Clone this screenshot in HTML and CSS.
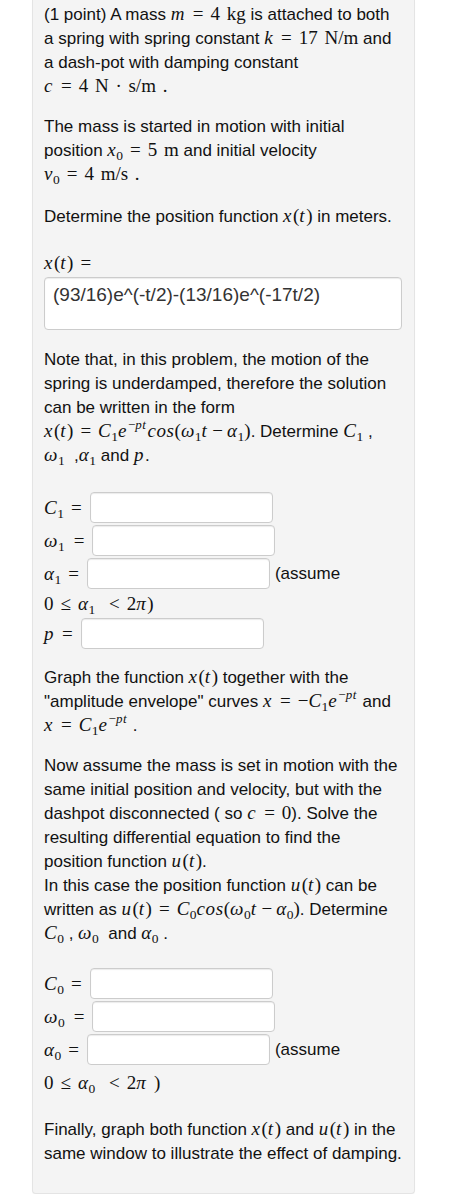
FILE: index.html
```html
<!DOCTYPE html>
<html>
<head>
<meta charset="utf-8">
<link rel="stylesheet" href="styles.css">
</head>
<body>
<div class="card">
  <p class="first">(1 point) A mass <span class="m"><i>m</i><span class="eq">=</span>4 kg</span> is attached to both<br>a spring with spring constant <span class="m"><i>k</i><span class="eq">=</span>17 N/m</span> and<br>a dash-pot with damping constant<br><span class="m"><i>c</i><span class="eq">=</span>4 N · s/m .</span></p>

  <p>The mass is started in motion with initial<br>position <span class="m"><i>x</i><sub>0</sub><span class="eq">=</span>5 m</span> and initial velocity<br><span class="m"><i>v</i><sub>0</sub><span class="eq">=</span>4 m/s .</span></p>

  <p class="determine">Determine the position function <span class="m"><i>x</i>(<i>t</i>)</span> in meters.</p>

  <div class="label-line"><span class="m"><i>x</i>(<i>t</i>)<span class="eq">=</span></span></div>
  <textarea class="answer-area" readonly>(93/16)e^(-t/2)-(13/16)e^(-17t/2)</textarea>

  <p class="after-area">Note that, in this problem, the motion of the<br>spring is underdamped, therefore the solution<br>can be written in the form<br><span class="m"><i>x</i>(<i>t</i>)<span class="eq">=</span><i>C</i><sub>1</sub><i>e</i><sup>−<i>pt</i></sup><i class="fn">cos</i>(<i>ω</i><sub>1</sub><i>t</i><span class="op">−</span><i>α</i><sub>1</sub>)</span>. Determine <span class="m"><i>C</i><sub>1</sub></span> ,<br><span class="m"><i>ω</i><sub>1</sub></span> &nbsp;,<span class="m"><i>α</i><sub>1</sub></span> and <span class="m"><i>p</i></span>.</p>

  <div class="answers">
    <div class="row"><span class="m"><i>C</i><sub>1</sub><span class="eq">=</span></span><input class="field" type="text"></div>
    <div class="row"><span class="m"><i>ω</i><sub>1</sub><span class="eq wide">=</span></span><input class="field" type="text"></div>
    <div class="row"><span class="m"><i>α</i><sub>1</sub><span class="eq">=</span></span><input class="field" type="text"><span class="assume">(assume</span></div>
    <div class="range"><span class="m">0<span class="eq">≤</span><i>α</i><sub>1</sub> <span class="eq">&lt;</span>2<i>π</i>)</span></div>
    <div class="row"><span class="m"><i>p</i><span class="eq">=</span></span><input class="field" type="text"></div>
  </div>

  <p>Graph the function <span class="m"><i>x</i>(<i>t</i>)</span> together with the<br>"amplitude envelope" curves <span class="m"><i>x</i><span class="eq">=</span>−<i>C</i><sub>1</sub><i>e</i><sup>−<i>pt</i></sup></span> and<br><span class="m"><i>x</i><span class="eq">=</span><i>C</i><sub>1</sub><i>e</i><sup>−<i>pt</i></sup></span> .</p>

  <p>Now assume the mass is set in motion with the<br>same initial position and velocity, but with the<br>dashpot disconnected ( so <span class="m"><i>c</i><span class="eq">=</span>0</span>). Solve the<br>resulting differential equation to find the<br>position function <span class="m"><i>u</i>(<i>t</i>)</span>.<br>In this case the position function <span class="m"><i>u</i>(<i>t</i>)</span> can be<br>written as <span class="m"><i>u</i>(<i>t</i>)<span class="eq">=</span><i>C</i><sub>0</sub><i class="fn">cos</i>(<i>ω</i><sub>0</sub><i>t</i><span class="op">−</span><i>α</i><sub>0</sub>)</span>. Determine<br><span class="m"><i>C</i><sub>0</sub></span> , <span class="m"><i>ω</i><sub>0</sub></span> &nbsp;and <span class="m"><i>α</i><sub>0</sub></span> .</p>

  <div class="answers second">
    <div class="row"><span class="m"><i>C</i><sub>0</sub><span class="eq">=</span></span><input class="field" type="text"></div>
    <div class="row"><span class="m"><i>ω</i><sub>0</sub><span class="eq wide">=</span></span><input class="field" type="text"></div>
    <div class="row"><span class="m"><i>α</i><sub>0</sub><span class="eq">=</span></span><input class="field" type="text"><span class="assume">(assume</span></div>
    <div class="range last"><span class="m">0<span class="eq">≤</span><i>α</i><sub>0</sub> <span class="eq">&lt;</span>2<i>π</i> )</span></div>
  </div>

  <p class="final">Finally, graph both function <span class="m"><i>x</i>(<i>t</i>)</span> and <span class="m"><i>u</i>(<i>t</i>)</span> in the<br>same window to illustrate the effect of damping.</p>
</div>
</body>
</html>
```
FILE: styles.css
```css
html, body {
  margin: 0;
  padding: 0;
  background: #ffffff;
}

body {
  font-family: "Liberation Sans", Arial, Helvetica, sans-serif;
  font-size: 17px;
  line-height: 24px;
  color: #111111;
}

.card {
  box-sizing: border-box;
  margin-left: 32px;
  width: 383px;
  background: #f4f4f4;
  border: 1px solid #e4e4e4;
  border-top: none;
  border-radius: 0 0 4px 4px;
  box-shadow: 0 1px 1px rgba(0, 0, 0, 0.04);
  padding: 3px 11px 27px 11px;
}

p {
  margin: 16px 0;
  white-space: nowrap;
}

p.first {
  margin-top: 0;
}

p.determine {
  margin-top: 18px;
}

.m {
  font-family: "Liberation Serif", "Times New Roman", serif;
  font-size: 19px;
  line-height: 1;
  word-spacing: 2px;
}

.m i {
  font-style: italic;
  letter-spacing: 1.5px;
}

.m i:has(+ sub) {
  letter-spacing: 0;
  padding-right: 0.5px;
}

.m i.fn {
  letter-spacing: 0.6px;
}

.m sup i {
  letter-spacing: 0.5px;
}

.m .eq {
  margin: 0 7px;
}

.m .eq.wide {
  margin-left: 9px;
}

.m .op {
  margin: 0 4px;
}

.m sub {
  font-size: 13.5px;
  line-height: 0;
  vertical-align: -4px;
}

.m sup {
  font-size: 13px;
  line-height: 0;
  vertical-align: 8px;
  margin-right: 1px;
}

.label-line {
  margin-top: 23px;
  height: 24px;
}

.answer-area {
  display: block;
  box-sizing: border-box;
  margin: 1px 0 0 0;
  width: 358px;
  height: 53px;
  padding: 5px 8px;
  font-family: "Liberation Sans", Arial, sans-serif;
  font-size: 19px;
  line-height: 24px;
  color: #333333;
  background: #ffffff;
  border: 1px solid #cccccc;
  border-radius: 4px;
  box-shadow: inset 0 1px 1px rgba(0, 0, 0, 0.08);
  resize: none;
  overflow: hidden;
}

p.after-area {
  margin-top: 18px;
}

.answers {
  margin: 23px 0 16px 0;
}

.answers.second {
  margin-top: 21px;
}

.row {
  display: flex;
  align-items: center;
  height: 33px;
  white-space: nowrap;
}

.row .m {
  line-height: 24px;
}

.field {
  box-sizing: border-box;
  width: 183px;
  height: 31px;
  margin-left: 1px;
  padding: 4px 6px;
  background: #ffffff;
  border: 1px solid #cccccc;
  border-radius: 4px;
  box-shadow: inset 0 1px 1px rgba(0, 0, 0, 0.08);
  font-family: "Liberation Sans", Arial, sans-serif;
  font-size: 17px;
}

.assume {
  margin-left: 5px;
}

.range {
  margin-top: 3px;
  height: 24px;
  white-space: nowrap;
}

.range.last {
  margin-top: 6px;
}

p.final {
  margin-top: 22px;
  margin-bottom: 0;
}
```
